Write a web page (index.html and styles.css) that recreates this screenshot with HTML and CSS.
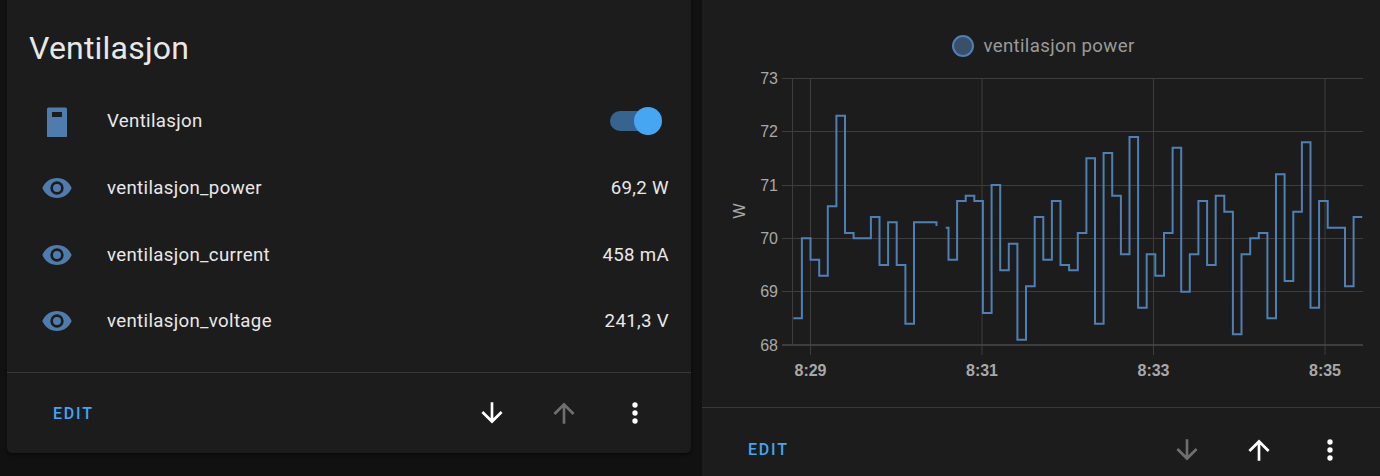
FILE: index.html
```html
<!DOCTYPE html>
<html lang="no">
<head>
<meta charset="utf-8">
<title>Ventilasjon</title>
<link rel="stylesheet" href="styles.css">
</head>
<body>
<main class="page">
  <section class="card card-entities">
    <div class="card-body">
      <h1 class="title">Ventilasjon</h1>
      <div class="row">
        <svg class="row-icon" viewBox="0 -1.500 32 32"><path fill-rule="evenodd" d="M7.500 1H24.500A1.500 1.500 0 0 1 26 2.500V29.500A1.500 1.500 0 0 1 24.500 31H7.500A1.500 1.500 0 0 1 6 29.500V2.500A1.500 1.500 0 0 1 7.500 1ZM11 5.500V10.500H21V5.500Z"/></svg>
        <span class="row-name">Ventilasjon</span>
        <span class="toggle"><span class="toggle-thumb"></span></span>
      </div>
      <div class="row">
        <svg class="row-icon" viewBox="0 0 24 24"><path d="M12,9A3,3 0 0,0 9,12A3,3 0 0,0 12,15A3,3 0 0,0 15,12A3,3 0 0,0 12,9M12,17A5,5 0 0,1 7,12A5,5 0 0,1 12,7A5,5 0 0,1 17,12A5,5 0 0,1 12,17M12,4.5C7,4.5 2.73,7.61 1,12C2.73,16.39 7,19.5 12,19.5C17,19.5 21.27,16.39 23,12C21.27,7.61 17,4.5 12,4.5Z"/></svg>
        <span class="row-name">ventilasjon_power</span>
        <span class="row-value">69,2 W</span>
      </div>
      <div class="row">
        <svg class="row-icon" viewBox="0 0 24 24"><path d="M12,9A3,3 0 0,0 9,12A3,3 0 0,0 12,15A3,3 0 0,0 15,12A3,3 0 0,0 12,9M12,17A5,5 0 0,1 7,12A5,5 0 0,1 12,7A5,5 0 0,1 17,12A5,5 0 0,1 12,17M12,4.5C7,4.5 2.73,7.61 1,12C2.73,16.39 7,19.5 12,19.5C17,19.5 21.27,16.39 23,12C21.27,7.61 17,4.5 12,4.5Z"/></svg>
        <span class="row-name">ventilasjon_current</span>
        <span class="row-value">458 mA</span>
      </div>
      <div class="row">
        <svg class="row-icon" viewBox="0 0 24 24"><path d="M12,9A3,3 0 0,0 9,12A3,3 0 0,0 12,15A3,3 0 0,0 15,12A3,3 0 0,0 12,9M12,17A5,5 0 0,1 7,12A5,5 0 0,1 12,7A5,5 0 0,1 17,12A5,5 0 0,1 12,17M12,4.5C7,4.5 2.73,7.61 1,12C2.73,16.39 7,19.5 12,19.5C17,19.5 21.27,16.39 23,12C21.27,7.61 17,4.5 12,4.5Z"/></svg>
        <span class="row-name">ventilasjon_voltage</span>
        <span class="row-value">241,3 V</span>
      </div>
    </div>
    <footer class="actions actions-left">
      <span class="edit">EDIT</span>
      <span class="action-icons">
        <svg class="action-icon" viewBox="0 0 24 24"><path d="M11,4H13V16L18.5,10.500L19.920,11.920L12,19.840L4.080,11.920L5.500,10.500L11,16V4Z"/></svg>
        <svg class="action-icon is-disabled" viewBox="0 0 24 24"><path d="M13,20H11V8L5.500,13.500L4.080,12.080L12,4.160L19.920,12.080L18.500,13.500L13,8V20Z"/></svg>
        <svg class="action-icon" viewBox="0 0 24 24"><path d="M12,16A2,2 0 0,1 14,18A2,2 0 0,1 12,20A2,2 0 0,1 10,18A2,2 0 0,1 12,16M12,10A2,2 0 0,1 14,12A2,2 0 0,1 12,14A2,2 0 0,1 10,12A2,2 0 0,1 12,10M12,4A2,2 0 0,1 14,6A2,2 0 0,1 12,8A2,2 0 0,1 10,6A2,2 0 0,1 12,4Z"/></svg>
      </span>
    </footer>
  </section>

  <section class="card card-chart">
    <div class="legend">
      <span class="legend-dot"></span>
      <span class="legend-label">ventilasjon power</span>
    </div>
    <svg class="chart" viewBox="702 60 678 347">
      <g class="grid">
        <path d="M782 78.500H1363M782 131.500H1363M782 185.500H1363M782 238.500H1363M782 291.500H1363"/>
        <path d="M792.500 78V345M810.500 78V355M982 78V355M1153.500 78V355M1325 78V355"/>
      </g>
      <path class="grid-base" d="M782 345H1363"/>
      <g class="y-labels">
        <text x="778" y="84">73</text>
        <text x="778" y="137">72</text>
        <text x="778" y="191">71</text>
        <text x="778" y="244">70</text>
        <text x="778" y="297">69</text>
        <text x="778" y="351">68</text>
      </g>
      <text class="y-title" transform="translate(745 211) rotate(-90)">W</text>
      <g class="x-labels">
        <text x="810.500" y="376">8:29</text>
        <text x="982" y="376">8:31</text>
        <text x="1153.500" y="376">8:33</text>
        <text x="1325" y="376">8:35</text>
      </g>
      <path class="series" d="M793.300 318.300H801.900V238.300H810.500V259.700H819.200V275.700H827.800V206.300H836.400V115.700H845V233H853.600V238.300H870.900V217H879.500V265H888.100V222.300H896.700V265H905.400V323.700H914V222.300H936.500V226M945.700 227.700H948.500V259.700H957.100V201H965.700V195.700H974.300V201H982.900V313H991.600V185H1000.200V270.300H1008.800V243.700H1017.400V339.700H1026V286.300H1034.700V217H1043.300V259.700H1051.900V201H1060.500V265H1069.100V270.300H1077.800V233H1086.400V158.300H1095V323.700H1103.600V153H1112.200V195.700H1120.900V254.300H1129.500V137H1138.100V307.700H1146.700V254.300H1155.300V275.700H1164V233H1172.600V147.700H1181.200V291.700H1189.800V254.300H1198.400V201H1207.100V265H1215.700V195.700H1224.300V211.700H1232.900V334.300H1241.500V254.300H1250.200V238.300H1258.800V233H1267.400V318.300H1276V174.300H1284.600V281H1293.300V211.700H1301.900V142.300H1310.500V307.700H1319.100V201H1327.700V227.700H1345V286.300H1353.600V217H1362.200"/>
    </svg>
    <footer class="actions actions-right">
      <span class="edit">EDIT</span>
      <span class="action-icons">
        <svg class="action-icon is-disabled" viewBox="0 0 24 24"><path d="M11,4H13V16L18.5,10.500L19.920,11.920L12,19.840L4.080,11.920L5.500,10.500L11,16V4Z"/></svg>
        <svg class="action-icon" viewBox="0 0 24 24"><path d="M13,20H11V8L5.500,13.500L4.080,12.080L12,4.160L19.920,12.080L18.500,13.500L13,8V20Z"/></svg>
        <svg class="action-icon" viewBox="0 0 24 24"><path d="M12,16A2,2 0 0,1 14,18A2,2 0 0,1 12,20A2,2 0 0,1 10,18A2,2 0 0,1 12,16M12,10A2,2 0 0,1 14,12A2,2 0 0,1 12,14A2,2 0 0,1 10,12A2,2 0 0,1 12,10M12,4A2,2 0 0,1 14,6A2,2 0 0,1 12,8A2,2 0 0,1 10,6A2,2 0 0,1 12,4Z"/></svg>
      </span>
    </footer>
  </section>
</main>
</body>
</html>
```
FILE: styles.css
```css
* { box-sizing: border-box; }

html, body {
  margin: 0;
  height: 476px;
  overflow: hidden;
  background: #111111;
  font-family: Roboto, "Liberation Sans", sans-serif;
}

.page {
  display: flex;
  gap: 11px;
  height: 476px;
  padding-left: 7px;
}

.card {
  display: flex;
  flex-direction: column;
  background: #1c1c1c;
}

.card-entities {
  width: 684px;
  height: 453px;
  border-radius: 0 0 5px 5px;
  box-shadow: 0 2px 3px rgba(0, 0, 0, 0.45);
}

.card-chart {
  width: 678px;
  height: 491px;
}

.card-body {
  height: 372px;
  padding-left: 23px;
  padding-right: 23px;
}

.title {
  margin: 0 0 0 -1px;
  height: 88px;
  padding-top: 27px;
  color: #e8e8e8;
  font-size: 32px;
  font-weight: 400;
  letter-spacing: 0.2px;
  line-height: 42px;
}

.row {
  display: flex;
  align-items: center;
  height: 66.670px;
  color: #e8e8e8;
  font-size: 18.670px;
  letter-spacing: 0.33px;
}

.row-icon {
  width: 32px;
  height: 32px;
  margin-left: 11px;
  margin-right: 34px;
  fill: #4f7cac;
  flex: none;
}

.row-name { flex: 1; }

.row-value { margin-right: -1px; }

.toggle {
  position: relative;
  width: 40px;
  height: 20px;
  margin-right: 18px;
  border-radius: 10px;
  background: #36648f;
}

.toggle-thumb {
  position: absolute;
  top: -4px;
  right: -12px;
  width: 28px;
  height: 28px;
  border-radius: 50%;
  background: #46a6f2;
}

.actions {
  display: flex;
  align-items: center;
  justify-content: space-between;
  border-top: 1px solid #383838;
  flex: none;
}

.actions-left {
  height: 81px;
  padding-left: 46px;
  padding-right: 40px;
}

.actions-right {
  height: 84px;
  padding-left: 46px;
  padding-right: 34px;
}

.edit {
  color: #42a5f5;
  font-size: 16px;
  font-weight: 500;
  letter-spacing: 1.800px;
}

.action-icons {
  display: flex;
  gap: 39.500px;
}

.action-icon {
  width: 32px;
  height: 32px;
  fill: #ffffff;
}

.action-icon.is-disabled { fill: #6f6f6f; }

.legend {
  display: flex;
  align-items: center;
  justify-content: center;
  gap: 9px;
  height: 60px;
  padding-top: 32px;
  padding-left: 5px;
  flex: none;
}

.legend-dot {
  width: 22px;
  height: 22px;
  border: 2px solid #4f7fb3;
  border-radius: 50%;
  background: #3a4f69;
}

.legend-label {
  color: #9a9a9a;
  font-size: 18.670px;
  letter-spacing: 0.33px;
}

.chart {
  display: block;
  width: 678px;
  height: 347px;
  flex: none;
}

.grid path {
  fill: none;
  stroke: #3d3d3d;
  stroke-width: 1;
}

.grid-base {
  fill: none;
  stroke: #4a4a4a;
  stroke-width: 1.500;
}

.series {
  fill: none;
  stroke: #4f7fb3;
  stroke-width: 2;
}

.y-labels text,
.x-labels text,
.y-title {
  fill: #a8a8a8;
  font-family: "Liberation Sans", sans-serif;
  font-size: 16px;
}

.y-labels text { text-anchor: end; }

.y-title { text-anchor: middle; }

.x-labels text {
  text-anchor: middle;
  font-weight: 700;
}
```
